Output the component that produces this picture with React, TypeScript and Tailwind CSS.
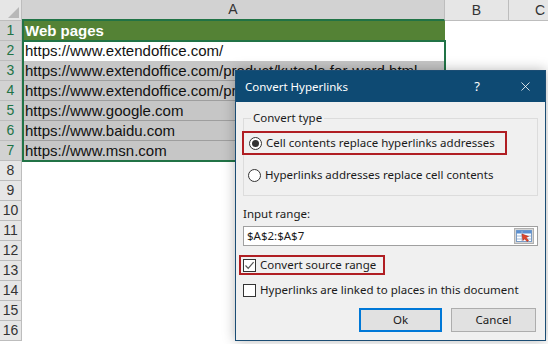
import React from "react";
import { X } from "lucide-react";

const rows: { n: number; text: string; kind: "head" | "active" | "sel" | "none" }[] = [
  { n: 1, text: "Web pages", kind: "head" },
  { n: 2, text: "https://www.extendoffice.com/", kind: "active" },
  { n: 3, text: "https://www.extendoffice.com/product/kutools-for-word.html", kind: "sel" },
  { n: 4, text: "https://www.extendoffice.com/product/kutools-for-outlook.html", kind: "sel" },
  { n: 5, text: "https://www.google.com", kind: "sel" },
  { n: 6, text: "https://www.baidu.com", kind: "sel" },
  { n: 7, text: "https://www.msn.com", kind: "sel" },
  { n: 8, text: "", kind: "none" },
  { n: 9, text: "", kind: "none" },
  { n: 10, text: "", kind: "none" },
  { n: 11, text: "", kind: "none" },
  { n: 12, text: "", kind: "none" },
  { n: 13, text: "", kind: "none" },
  { n: 14, text: "", kind: "none" },
  { n: 15, text: "", kind: "none" },
  { n: 16, text: "", kind: "none" },
];

function Radio({ checked }: { checked?: boolean }) {
  return (
    <div className="w-[13px] h-[13px] rounded-full border border-[#333333] bg-white flex items-center justify-center shrink-0">
      {checked && <div className="w-[7px] h-[7px] rounded-full bg-[#333333]" />}
    </div>
  );
}

function Check({ checked }: { checked?: boolean }) {
  return (
    <div className="w-[13px] h-[13px] border border-[#333333] bg-white flex items-center justify-center shrink-0">
      {checked && (
        <svg width="11" height="11" viewBox="0 0 11 11">
          <path d="M1.5 5.5 L4.2 8.3 L9.6 2.2" fill="none" stroke="#555555" strokeWidth="1.2" />
        </svg>
      )}
    </div>
  );
}

export default function App() {
  return (
    <div className="relative w-[548px] h-[344px] overflow-hidden bg-white font-['Liberation_Sans',Arial,sans-serif]">
      {/* column header */}
      <div className="flex h-[21px]">
        <div className="relative w-[22px] h-[21px] bg-[#e6e6e6] border-r border-b border-[#bdbdbd] shrink-0">
          <svg className="absolute right-[2px] bottom-[2px]" width="11" height="11" viewBox="0 0 11 11">
            <path d="M11 0 L11 11 L0 11 Z" fill="#b8b8b8" />
          </svg>
        </div>
        <div className="w-[423px] h-[21px] bg-[#d2d2d2] border-r border-[#bdbdbd] border-b-2 border-b-[#217346] flex items-center justify-center text-[14px] text-[#333333] shrink-0">
          A
        </div>
        <div className="w-[64px] h-[21px] bg-[#e6e6e6] border-r border-b border-[#bdbdbd] flex items-center justify-center text-[14px] text-[#333333] shrink-0">
          B
        </div>
        <div className="flex-1 h-[21px] bg-[#e6e6e6] border-b border-[#bdbdbd] flex items-center pl-[26px] text-[14px] text-[#333333]">
          C
        </div>
      </div>

      {/* rows */}
      {rows.map((r) => {
        const sel = r.n <= 7;
        const cellCls =
          r.kind === "head"
            ? "bg-[#548235] text-white font-bold"
            : r.kind === "active"
            ? "bg-white text-[#111111]"
            : r.kind === "sel"
            ? "bg-[#c6c6c6] text-[#111111] border-b border-[#9e9e9e]"
            : "bg-white";
        return (
          <div key={r.n} className="flex h-[20px]">
            <div
              className={
                "w-[22px] h-[20px] border-r border-b border-[#bdbdbd] flex items-center justify-center text-[14px] shrink-0 " +
                (sel ? "bg-[#d2d2d2] text-[#217346]" : "bg-[#e6e6e6] text-[#333333]")
              }
            >
              {r.n}
            </div>
            <div
              className={
                "w-[423px] h-[20px] px-[3px] text-[15px] leading-[20px] whitespace-nowrap overflow-hidden shrink-0 " + cellCls
              }
            >
              {r.text}
            </div>
            <div className="w-[64px] h-[20px] bg-white shrink-0" />
            <div className="flex-1 h-[20px] bg-white" />
          </div>
        );
      })}

      {/* selection outline */}
      <div className="absolute left-[22px] top-[40px] w-[424px] h-[122px] border-2 border-[#217346] pointer-events-none" />
      <div className="absolute left-[22px] top-[21px] w-[2px] h-[20px] bg-[#217346]" />

      {/* dialog */}
      <div className="absolute left-[235px] top-[70px] w-[311px] h-[271px] bg-[#f0f0f0] border border-[#1b4d74] shadow-[0_0_12px_rgba(0,0,0,0.28)] font-['Noto_Sans','Segoe_UI',sans-serif] text-[11.5px] text-[#1a1a1a] flex flex-col">
        <div className="h-[31px] bg-[#0e4a73] flex items-center pl-[9px] text-white shrink-0">
          <span className="text-[11.5px]">Convert Hyperlinks</span>
          <span className="ml-auto mr-[38px] text-[13px]">?</span>
          <X className="mr-[12px]" size={15} strokeWidth={1.3} color="#ffffff" />
        </div>
        <div className="px-[7px] flex flex-col">
          {/* group box */}
          <div className="relative mt-[16px] w-[295px] h-[78px] border border-[#dcdcdc] flex flex-col">
            <span className="absolute left-[7px] top-[-9px] px-[2px] bg-[#f0f0f0] leading-[16px]">Convert type</span>
            <div className="mt-[12px] -ml-[2px] w-[265px] h-[24px] border-2 border-[#b01e23] flex items-center pl-[5px] gap-[4px]">
              <Radio checked />
              <span className="leading-[16px]">Cell contents replace hyperlinks addresses</span>
            </div>
            <div className="mt-[10px] h-[20px] flex items-center pl-[4px] gap-[4px]">
              <Radio />
              <span className="leading-[16px]">Hyperlinks addresses replace cell contents</span>
            </div>
          </div>

          <div className="mt-[10px] leading-[16px]">Input range:</div>

          <div className="mt-[4px] w-[295px] h-[20px] border border-[#a0a0a0] bg-white flex items-center pl-[3px]">
            <span className="leading-[16px]">$A$2:$A$7</span>
            <div className="ml-auto mr-[3px] w-[20px] h-[16px] bg-[#d6d6d6] border border-[#b0b0b0] flex items-center justify-center">
              <svg width="16" height="12" viewBox="0 0 16 12">
                <rect x="0.5" y="0.5" width="15" height="11" fill="#ffffff" stroke="#7a9cc6" />
                <rect x="0.5" y="0.5" width="15" height="3" fill="#5b8fd0" />
                <line x1="1" y1="6" x2="15" y2="6" stroke="#9fb8d8" />
                <line x1="1" y1="9" x2="15" y2="9" stroke="#9fb8d8" />
                <line x1="6" y1="1" x2="6" y2="11" stroke="#9fb8d8" />
                <path d="M6 4 L12.5 6.5 L10 7.5 L12.5 10.5 L11 11.5 L8.6 8.6 L7 10.5 Z" fill="#e0452b" stroke="#b02a16" strokeWidth="0.6" />
              </svg>
            </div>
          </div>

          <div className="mt-[9px] -ml-[4px] w-[146px] h-[20px] border-2 border-[#b01e23] flex items-center pl-[2px] gap-[4px]">
            <Check checked />
            <span className="leading-[16px]">Convert source range</span>
          </div>

          <div className="mt-[7px] h-[16px] flex items-center gap-[4px]">
            <Check />
            <span className="leading-[16px]">Hyperlinks are linked to places in this document</span>
          </div>

          <div className="mt-[10px] flex justify-end gap-[9px] pr-[2px]">
            <div className="w-[83px] h-[24px] bg-[#e1e1e1] border-2 border-[#0078d7] flex items-center justify-center">Ok</div>
            <div className="w-[85px] h-[24px] bg-[#e1e1e1] border border-[#adadad] flex items-center justify-center">Cancel</div>
          </div>
        </div>
      </div>
    </div>
  );
}
